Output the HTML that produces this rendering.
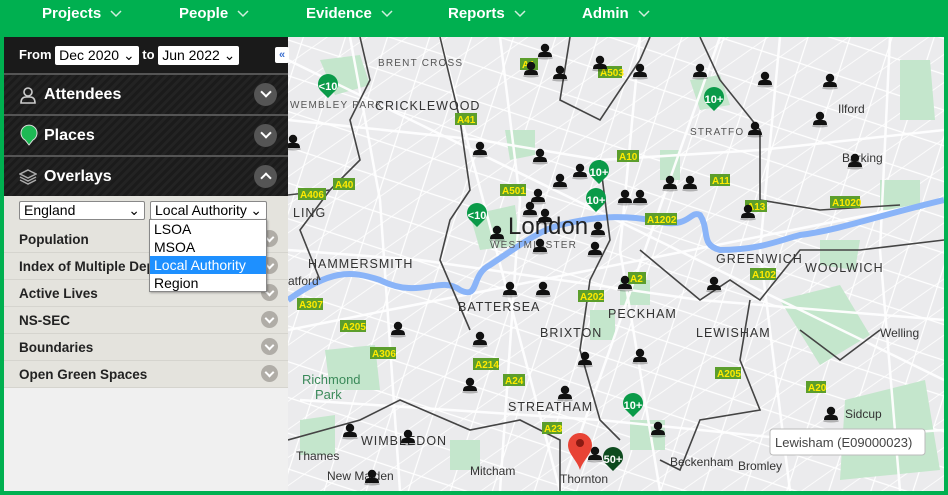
<!DOCTYPE html>
<html><head><meta charset="utf-8"><style>
*{margin:0;padding:0;box-sizing:border-box}
body{width:948px;height:495px;overflow:hidden;background:#00b050;font-family:"Liberation Sans",sans-serif;position:relative}
.nav{position:absolute;top:0;left:0;width:948px;height:37px;color:#fff;font-weight:bold;font-size:15px}
.nav span{position:absolute;top:5px}
.nav svg{margin-left:9px;vertical-align:middle}
#map{position:absolute;left:288px;top:37px;width:656px;height:454px;background:#ebebed;overflow:hidden}
#panel{position:absolute;left:4px;top:37px;width:284px;height:454px;background:#f0f0f0}
.dark{background:#1f1f1f;color:#fff;font-weight:bold}
.date{height:36px;font-size:13px;padding:9px 0 0 15px;background:#1a1a1a}
.sel{display:inline-block;background:#fff;color:#000;font-weight:normal;border-radius:2px;padding:0 4px;height:19px;line-height:19px;font-size:14px;vertical-align:middle}
.hdr{height:41px;border-top:2px solid #555;font-size:16px;padding:11px 0 0 40px;position:relative;background:repeating-linear-gradient(135deg,#232323 0 3px,#1b1b1b 3px 6px)}
.circ{position:absolute;right:11px;top:8px;width:23px;height:23px;border-radius:50%;background:#555}
.circ:after{content:"";position:absolute;left:7.5px;top:5px;width:6px;height:6px;border-right:2.5px solid #fff;border-bottom:2.5px solid #fff;transform:rotate(45deg)}
.circ.up:after{top:9px;transform:rotate(225deg)}
.row{height:27px;background:#e4e3dd;border-bottom:1px solid #d5d4ce;font-size:13.5px;font-weight:bold;padding:6px 0 0 15px;color:#222;position:relative}
.row .c{position:absolute;right:10px;top:4px;width:17px;height:17px;border-radius:50%;background:#b0ada7}
.row .c:after{content:"";position:absolute;left:5px;top:4px;width:5px;height:5px;border-right:2px solid #fff;border-bottom:2px solid #fff;transform:rotate(45deg)}
.ddsel{position:absolute;background:#fff;border:1px solid #888;border-radius:2px;font-size:14px;height:19px;line-height:17px;padding-left:4px;color:#000}
</style></head><body>
<div class="nav">
<span style="left:42px">Projects<svg width="12" height="8" viewBox="0 0 12 8"><path d="M1 1 L6 6 L11 1" stroke="#cfeedd" stroke-width="1.5" fill="none"/></svg></span>
<span style="left:179px">People<svg width="12" height="8" viewBox="0 0 12 8"><path d="M1 1 L6 6 L11 1" stroke="#cfeedd" stroke-width="1.5" fill="none"/></svg></span>
<span style="left:306px">Evidence<svg width="12" height="8" viewBox="0 0 12 8"><path d="M1 1 L6 6 L11 1" stroke="#cfeedd" stroke-width="1.5" fill="none"/></svg></span>
<span style="left:448px">Reports<svg width="12" height="8" viewBox="0 0 12 8"><path d="M1 1 L6 6 L11 1" stroke="#cfeedd" stroke-width="1.5" fill="none"/></svg></span>
<span style="left:582px">Admin<svg width="12" height="8" viewBox="0 0 12 8"><path d="M1 1 L6 6 L11 1" stroke="#cfeedd" stroke-width="1.5" fill="none"/></svg></span>
</div>
<div id="map">
<svg width="656" height="454" viewBox="288 37 656 454" xmlns="http://www.w3.org/2000/svg" font-family="Liberation Sans, sans-serif">
<defs>
<g id="p"><circle cx="0" cy="-9" r="4.2" fill="#111"/><path d="M-7 0 Q-7 -5 -3 -5 L3 -5 Q7 -5 7 0 Z" fill="#111"/><ellipse cx="0" cy="1" rx="8" ry="1.5" fill="#000" opacity=".25"/></g>
<pattern id="st" width="40" height="34" patternUnits="userSpaceOnUse" patternTransform="rotate(18)"><path d="M0 17 H40 M20 0 V34" stroke="#fff" stroke-width="1.2" fill="none"/></pattern>
<pattern id="st2" width="27" height="23" patternUnits="userSpaceOnUse" patternTransform="rotate(-35)"><path d="M0 11 H27" stroke="#fff" stroke-width="1" fill="none"/></pattern>
</defs>
<rect x="288" y="37" width="656" height="454" fill="url(#st)"/>
<rect x="288" y="37" width="656" height="454" fill="url(#st2)" opacity=".8"/>
<g fill="#c4e6cc">
<path d="M320 60 l40 -5 l10 30 l-35 10z"/><path d="M470 215 l45 -10 l5 40 l-40 5z"/><path d="M505 130 l30 0 l0 25 l-25 5z"/><path d="M325 350 l50 -5 l5 45 l-50 0z"/><path d="M660 150 l20 0 l0 30 l-20 0z"/><path d="M780 300 l60 -15 l30 50 l-50 30z"/><path d="M845 400 l80 -20 l15 90 l-100 10z"/><path d="M690 80 l30 -5 l10 30 l-30 5z"/><path d="M900 60 l30 0 l5 60 l-35 0z"/><path d="M620 280 l30 0 l0 25 l-30 0z"/><path d="M590 310 l25 0 l0 30 l-25 0z"/><path d="M820 240 l40 0 l-5 30 l-35 -5z"/><path d="M300 420 l35 -5 l0 40 l-35 0z"/><path d="M450 440 l30 0 l0 30 l-30 0z"/><path d="M630 420 l35 0 l0 30 l-35 0z"/><path d="M880 180 l40 0 l0 30 l-40 0z"/>
</g>
<g stroke="#fff" stroke-width="2.5" fill="none" opacity=".95">
<path d="M288 120 L480 140 L600 160 L760 150 L944 130"/><path d="M288 250 L420 260 L560 280 L700 300 L944 320"/><path d="M300 400 L450 410 L600 420 L800 440 L944 430"/><path d="M350 37 L380 200 L400 491"/><path d="M500 37 L520 200 L500 491"/><path d="M640 37 L620 250 L660 491"/><path d="M780 37 L760 250 L790 491"/><path d="M890 37 L880 250 L900 491"/><path d="M288 330 L944 200"/><path d="M288 60 L944 380"/><path d="M440 37 L560 491"/><path d="M720 37 L560 491"/>
</g>
<path d="M288 300 C330 270 350 270 380 280 C420 300 440 275 460 290 C480 300 470 275 490 265 C520 245 540 230 560 225 C600 215 630 215 660 222 C690 228 690 210 700 215 C710 230 700 245 720 250 C760 250 780 240 800 235 C840 230 880 215 944 200" stroke="#8ab4f8" stroke-width="6" fill="none"/>
<g stroke="#444" stroke-width="1.6" fill="none">
<path d="M288 195 L330 190 L360 160 L350 120 L370 80 L360 37"/><path d="M440 37 L460 120 L470 190 L450 220 L440 260 L470 330"/><path d="M570 37 L560 100 L600 120 L640 60 L650 37"/><path d="M600 160 L610 240 L590 280 L580 350 L600 420 L620 440"/><path d="M640 250 L700 300 L730 280 L760 300 L800 250 L860 250 L944 240"/><path d="M750 300 L740 360 L760 410 L700 420 L680 470 L660 460"/><path d="M288 440 L360 420 L400 400 L470 430 L520 420 L560 440 L560 491"/><path d="M880 330 L840 360 L800 330"/><path d="M700 37 L720 80 L760 130 L760 200 L820 210 L900 205"/><path d="M330 190 L300 230 L320 280"/>
</g>
<g font-size="10" font-weight="bold" fill="#ffea00">
<g transform="translate(520,58)"><rect width="18" height="12" fill="#5c9e2c"/><text x="2" y="10">A1</text></g>
<g transform="translate(598,66)"><rect width="24" height="12" fill="#5c9e2c"/><text x="2" y="10">A503</text></g>
<g transform="translate(455,113)"><rect width="22" height="12" fill="#5c9e2c"/><text x="2" y="10">A41</text></g>
<g transform="translate(617,150)"><rect width="22" height="12" fill="#5c9e2c"/><text x="2" y="10">A10</text></g>
<g transform="translate(500,184)"><rect width="26" height="12" fill="#5c9e2c"/><text x="2" y="10">A501</text></g>
<g transform="translate(333,178)"><rect width="22" height="12" fill="#5c9e2c"/><text x="2" y="10">A40</text></g>
<g transform="translate(298,188)"><rect width="28" height="12" fill="#5c9e2c"/><text x="2" y="10">A406</text></g>
<g transform="translate(645,213)"><rect width="32" height="12" fill="#5c9e2c"/><text x="2" y="10">A1202</text></g>
<g transform="translate(745,200)"><rect width="22" height="12" fill="#5c9e2c"/><text x="2" y="10">A13</text></g>
<g transform="translate(830,196)"><rect width="30" height="12" fill="#5c9e2c"/><text x="2" y="10">A1020</text></g>
<g transform="translate(628,272)"><rect width="18" height="12" fill="#5c9e2c"/><text x="2" y="10">A2</text></g>
<g transform="translate(750,268)"><rect width="26" height="12" fill="#5c9e2c"/><text x="2" y="10">A102</text></g>
<g transform="translate(578,290)"><rect width="26" height="12" fill="#5c9e2c"/><text x="2" y="10">A202</text></g>
<g transform="translate(297,298)"><rect width="26" height="12" fill="#5c9e2c"/><text x="2" y="10">A307</text></g>
<g transform="translate(340,320)"><rect width="26" height="12" fill="#5c9e2c"/><text x="2" y="10">A205</text></g>
<g transform="translate(370,347)"><rect width="26" height="12" fill="#5c9e2c"/><text x="2" y="10">A306</text></g>
<g transform="translate(473,358)"><rect width="26" height="12" fill="#5c9e2c"/><text x="2" y="10">A214</text></g>
<g transform="translate(503,374)"><rect width="22" height="12" fill="#5c9e2c"/><text x="2" y="10">A24</text></g>
<g transform="translate(715,367)"><rect width="26" height="12" fill="#5c9e2c"/><text x="2" y="10">A205</text></g>
<g transform="translate(806,381)"><rect width="20" height="12" fill="#5c9e2c"/><text x="2" y="10">A20</text></g>
<g transform="translate(542,422)"><rect width="20" height="12" fill="#5c9e2c"/><text x="2" y="10">A23</text></g>
<g transform="translate(710,174)"><rect width="20" height="12" fill="#5c9e2c"/><text x="2" y="10">A11</text></g>
</g>
<g fill="#555" font-size="10" letter-spacing="1.2">
<text x="378" y="66">BRENT CROSS</text><text x="290" y="108">WEMBLEY PARK</text><text x="490" y="248">WESTMINSTER</text><text x="690" y="135">STRATFO</text>
</g>
<g fill="#333" font-size="12.5" letter-spacing="1">
<text x="375" y="110">CRICKLEWOOD</text><text x="308" y="268">HAMMERSMITH</text><text x="458" y="311">BATTERSEA</text><text x="540" y="337">BRIXTON</text><text x="608" y="318">PECKHAM</text><text x="696" y="337">LEWISHAM</text><text x="716" y="263">GREENWICH</text><text x="805" y="272">WOOLWICH</text><text x="508" y="411">STREATHAM</text><text x="361" y="445">WIMBLEDON</text><text x="293" y="217">LING</text>
</g>
<g fill="#333" font-size="12">
<text x="302" y="384" fill="#3b8a5a" font-size="13">Richmond</text><text x="315" y="399" fill="#3b8a5a" font-size="13">Park</text><text x="880" y="337">Welling</text><text x="845" y="418">Sidcup</text><text x="670" y="466">Beckenham</text><text x="738" y="470">Bromley</text><text x="470" y="475">Mitcham</text><text x="560" y="483">Thornton</text><text x="327" y="480">New Malden</text><text x="296" y="460">Thames</text><text x="838" y="113">Ilford</text><text x="842" y="162">Barking</text><text x="288" y="285">atford</text>
</g>
<text x="508" y="234" font-size="24" fill="#222">London</text>
<g>
<use href="#p" x="545" y="57"/><use href="#p" x="531" y="75"/><use href="#p" x="560" y="79"/><use href="#p" x="600" y="69"/><use href="#p" x="640" y="77"/><use href="#p" x="700" y="77"/><use href="#p" x="820" y="125"/><use href="#p" x="755" y="135"/><use href="#p" x="480" y="155"/><use href="#p" x="540" y="162"/><use href="#p" x="580" y="177"/><use href="#p" x="560" y="187"/><use href="#p" x="625" y="203"/><use href="#p" x="670" y="189"/><use href="#p" x="690" y="189"/><use href="#p" x="640" y="203"/><use href="#p" x="538" y="202"/><use href="#p" x="530" y="215"/><use href="#p" x="545" y="222"/><use href="#p" x="497" y="239"/><use href="#p" x="540" y="252"/><use href="#p" x="598" y="235"/><use href="#p" x="595" y="255"/><use href="#p" x="625" y="289"/><use href="#p" x="510" y="295"/><use href="#p" x="543" y="295"/><use href="#p" x="480" y="345"/><use href="#p" x="398" y="335"/><use href="#p" x="640" y="362"/><use href="#p" x="585" y="365"/><use href="#p" x="565" y="399"/><use href="#p" x="470" y="391"/><use href="#p" x="350" y="437"/><use href="#p" x="408" y="443"/><use href="#p" x="658" y="435"/><use href="#p" x="765" y="85"/><use href="#p" x="714" y="290"/><use href="#p" x="831" y="420"/><use href="#p" x="372" y="483"/><use href="#p" x="595" y="460"/><use href="#p" x="855" y="167"/><use href="#p" x="830" y="87"/><use href="#p" x="748" y="218"/><use href="#p" x="293" y="148"/>
</g>
<g font-size="11" font-weight="bold" fill="#fff" text-anchor="middle">
<g transform="translate(328,86)"><path d="M0 12 L-6 6 A10 10 0 1 1 6 6Z" fill="#0a9a48"/><text y="4">&lt;10</text></g>
<g transform="translate(714,99)"><path d="M0 12 L-6 6 A10 10 0 1 1 6 6Z" fill="#0a9a48"/><text y="4">10+</text></g>
<g transform="translate(599,172)"><path d="M0 12 L-6 6 A10 10 0 1 1 6 6Z" fill="#0a9a48"/><text y="4">10+</text></g>
<g transform="translate(596,200)"><path d="M0 12 L-6 6 A10 10 0 1 1 6 6Z" fill="#0a9a48"/><text y="4">10+</text></g>
<g transform="translate(477,215)"><path d="M0 12 L-6 6 A10 10 0 1 1 6 6Z" fill="#0a9a48"/><text y="4">&lt;10</text></g>
<g transform="translate(633,405)"><path d="M0 12 L-6 6 A10 10 0 1 1 6 6Z" fill="#0a9a48"/><text y="4">10+</text></g>
<g transform="translate(613,459)"><path d="M0 12 L-6 6 A10 10 0 1 1 6 6Z" fill="#0d4a1e"/><text y="4">50+</text></g>
</g>
<g transform="translate(580,440)"><path d="M0 30 C-3 20 -12 14 -12 5 A12 12 0 1 1 12 5 C12 14 3 20 0 30Z" fill="#e84335"/><circle cx="0" cy="3" r="4" fill="#8b1a12"/></g>
<g><rect x="770" y="429" width="155" height="26" rx="3" fill="#fff" stroke="#bbb"/><text x="775" y="447" font-size="13" fill="#444">Lewisham (E09000023)</text></g>
</svg>
</div>
<div id="panel">
<div class="dark date">From <span class="sel">Dec 2020 ⌄</span> to <span class="sel">Jun 2022 ⌄</span></div>
<div style="position:absolute;left:271px;top:10px;width:14px;height:16px;background:#fff;border-radius:2px;color:#3a6ecf;font-size:11px;text-align:center;line-height:16px;font-weight:bold">«</div>
<div class="dark hdr"><svg style="position:absolute;left:15px;top:11px" width="18" height="18" viewBox="0 0 18 18"><circle cx="9" cy="6" r="4" fill="none" stroke="#ccc" stroke-width="1.6"/><path d="M2 17 Q2 11 7 11 L11 11 Q16 11 16 17 Z" fill="none" stroke="#ccc" stroke-width="1.6"/></svg>Attendees<div class="circ"></div></div>
<div class="dark hdr"><svg style="position:absolute;left:16px;top:8px" width="18" height="22" viewBox="0 0 18 22"><path d="M9 21 L5 16 A8 8 0 1 1 13 16Z" fill="#1db954" stroke="#ddd" stroke-width="1"/></svg>Places<div class="circ"></div></div>
<div class="dark hdr"><svg style="position:absolute;left:15px;top:11px" width="18" height="18" viewBox="0 0 18 18"><path d="M9 2 L17 6 L9 10 L1 6Z M1 9 L9 13 L17 9 M1 12 L9 16 L17 12" fill="none" stroke="#aaa" stroke-width="1.5"/></svg>Overlays<div class="circ up"></div></div>
<div style="height:30px;background:#e4e3dd;position:relative"></div>
<div class="row">Population<div class="c"></div></div>
<div class="row">Index of Multiple Deprivation<div class="c"></div></div>
<div class="row">Active Lives<div class="c"></div></div>
<div class="row">NS-SEC<div class="c"></div></div>
<div class="row">Boundaries<div class="c"></div></div>
<div class="row">Open Green Spaces<div class="c"></div></div>
<div class="ddsel" style="left:15px;top:164px;width:126px">England<span style="position:absolute;right:4px">⌄</span></div>
<div class="ddsel" style="left:146px;top:164px;width:117px">Local Authority<span style="position:absolute;right:4px">⌄</span></div>
<div style="position:absolute;left:145px;top:182px;width:118px;height:73px;background:#fff;border:1px solid #888;font-size:14px;line-height:18px;color:#000;box-shadow:1px 1px 2px rgba(0,0,0,.3)">
<div style="padding-left:4px">LSOA</div><div style="padding-left:4px">MSOA</div><div style="padding-left:4px;background:#1e90ff;color:#fff">Local Authority</div><div style="padding-left:4px">Region</div></div>
</div>
</body></html>
